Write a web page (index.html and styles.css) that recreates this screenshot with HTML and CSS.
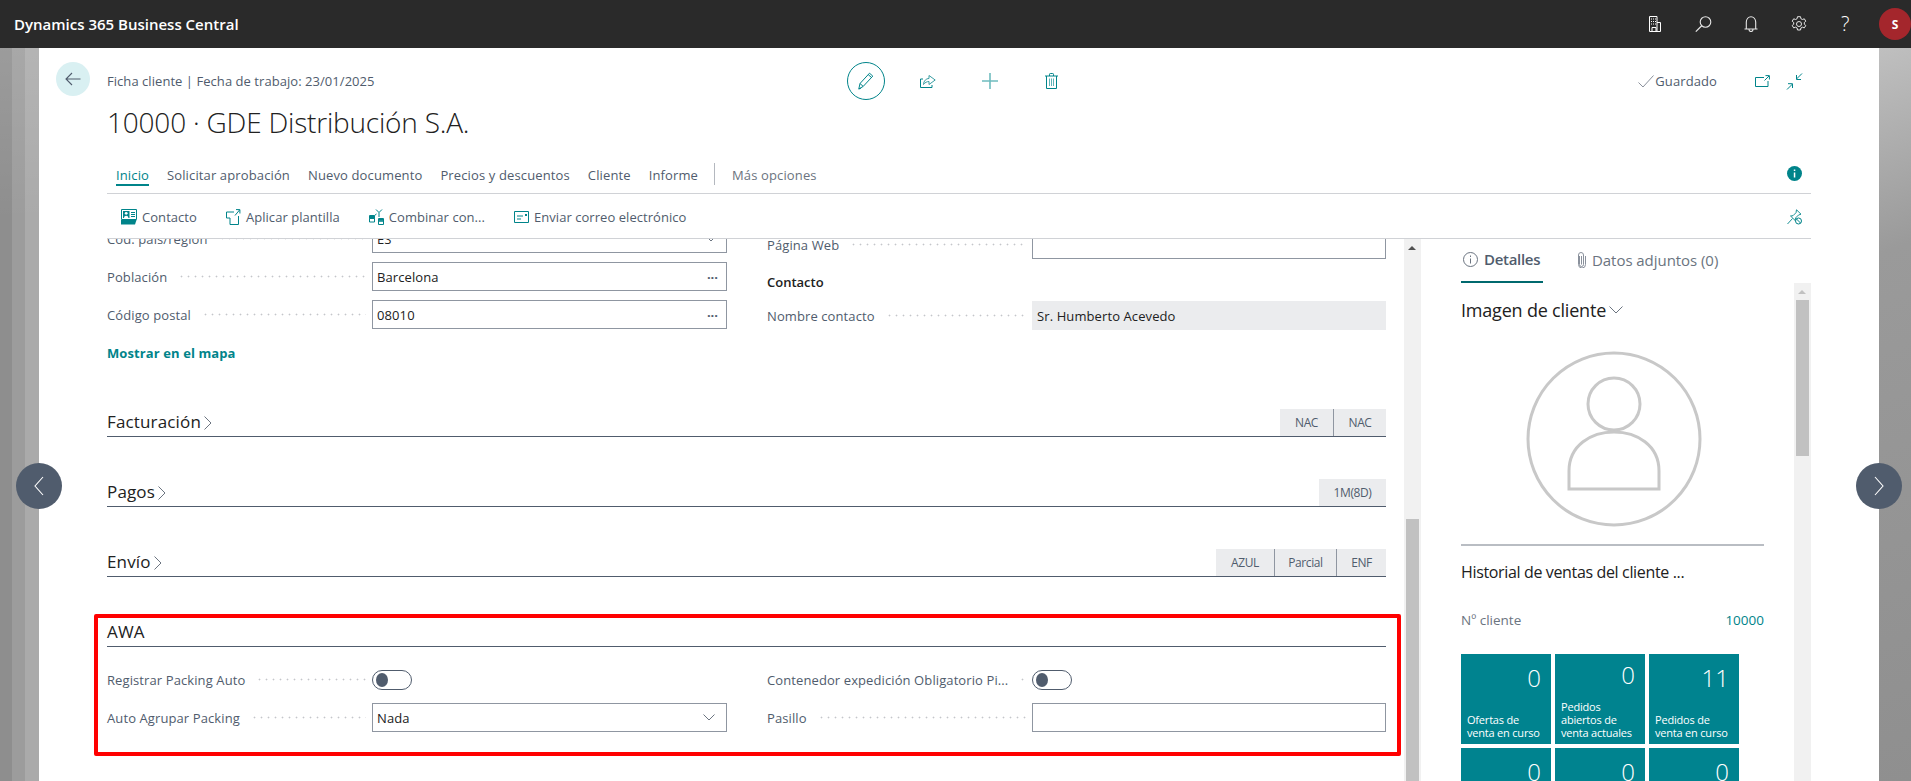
FILE: index.html
```html
<!DOCTYPE html>
<html lang="es">
<head>
<meta charset="utf-8">
<title>Ficha cliente</title>
<link rel="stylesheet" href="styles.css">
</head>
<body>
<header class="topbar">
  <div class="brand">Dynamics 365 Business Central</div>
  <div class="top-icons">
    <svg class="ti ti-building" viewBox="0 0 12 16" width="12" height="16"><path d="M.5 15.500V.5h7.500v15M8 6.500h3.500v9H.5" fill="none" stroke="#fff"/><path d="M2 2.500h1v1H2zM4 2.500h1v1H4zM6 2.500h1v1H6zM2 5h1v1H2zM4 5h1v1H4zM6 5h1v1H6zM2 7.500h1v1H2zM4 7.500h1v1H4zM6 7.500h1v1H6z" fill="#fff"/><path d="M3 15.500V11.500h4v4" fill="none" stroke="#fff"/></svg>
    <svg class="ti ti-search" viewBox="0 0 17 16" width="17" height="16"><circle cx="10.500" cy="6" r="5.300" fill="none" stroke="#e6e6e6" stroke-width="1.100"/><path d="M6.700 9.800.8 15.600" stroke="#e6e6e6" stroke-width="1.200"/></svg>
    <svg class="ti ti-bell" viewBox="0 0 14 16" width="14" height="16"><path d="M2.300 13V6a4.700 5.300 0 0 1 9.400 0v7zM.5 13h13M5 13.500a2 2 0 0 0 4 0" fill="none" stroke="#e6e6e6" stroke-width="1.100"/></svg>
    <svg class="ti ti-gear" viewBox="0 0 18 16" width="18" height="16"><circle cx="9" cy="8" r="2.500" fill="none" stroke="#e6e6e6"/><path d="M7.500.7h3l.4 2 1.500.8 1.900-.7 1.500 2.400-1.500 1.300v1.700l1.500 1.300-1.500 2.400-1.900-.7-1.500.8-.4 2h-3l-.4-2-1.500-.8-1.900.7-1.500-2.400 1.500-1.300V6.500L2.200 5.200l1.500-2.400 1.900.7 1.500-.8z" fill="none" stroke="#e6e6e6"/></svg>
    <span class="ti-help">?</span>
    <span class="avatar">S</span>
  </div>
</header>

<div class="card">
  <div class="head">
    <button class="back" aria-label="Volver"><svg viewBox="0 0 16 14" width="16" height="14"><path d="M15.500 7H1M7 1 1 7l6 6" fill="none" stroke="#505c6d" stroke-width="1.100"/></svg></button>
    <div class="crumb">Ficha cliente | Fecha de trabajo: 23/01/2025</div>
    <div class="center-actions">
      <span class="edit"><svg viewBox="0 0 16 18" width="16" height="18"><path d="M.8 17 2 11.500 11.500 1.200l3.300 2.900-9.600 10.300zM2 11.500l3.200 2.900M10.200 2.600l3.300 2.900M.8 17l2.300-.9" fill="none" stroke="#00848a"/></svg></span>
      <svg class="a-share" viewBox="0 0 16 14" width="16" height="14"><path d="M3 5H.5v8.500h11.500V11" fill="none" stroke="#00848a"/><path d="M3.500 10.500c.2-3.700 2.700-6 5.500-6V1.500l6.200 4.500L9 10.500V7.500c-2.200 0-4 1-5.500 3z" fill="none" stroke="#3a9ea3"/></svg>
      <svg class="a-plus" viewBox="0 0 16 16" width="16" height="16"><path d="M8 0v16M0 8h16" stroke="#6fbcbf" stroke-width="1.600"/></svg>
      <svg class="a-trash" viewBox="0 0 13 16" width="13" height="16"><path d="M1.500 3v12.500h10V3M4.500 3V1.300q0-.8.8-.8h2.400q.8 0 .8.8V3M0 3h13" fill="none" stroke="#00848a"/><path d="M4.500 5.500v7.500M6.500 5.500v7.500M8.500 5.500v7.500" stroke="#5fb3b7"/></svg>
    </div>
    <div class="saved">
      <svg viewBox="0 0 16 13" width="16" height="13"><path d="M.5 7.500 5 12 15.500.5" fill="none" stroke="#8a919c"/></svg>
      <span>Guardado</span>
      <svg class="s-open" viewBox="0 0 15 12" width="15" height="12"><path d="M9 2.500H.5v9h12.500V6" fill="none" stroke="#00848a"/><path d="M9.500 5.500 14 1M10.500.6H14.400V4.500" fill="none" stroke="#00848a"/></svg>
      <svg class="s-collapse" viewBox="0 0 17 17" width="17" height="17"><path d="M16 .5 10.500 6M10.500 2V6.500H15M1 16.500 6.500 11M2 10.700H6.500V15" fill="none" stroke="#00848a"/></svg>
    </div>
  </div>
  <h1 class="title">10000 · GDE Distribución S.A.</h1>

  <nav class="tabs">
    <span class="tab tab-on">Inicio</span>
    <span class="tab">Solicitar aprobación</span>
    <span class="tab">Nuevo documento</span>
    <span class="tab">Precios y descuentos</span>
    <span class="tab">Cliente</span>
    <span class="tab">Informe</span>
    <span class="tab-sep"></span>
    <span class="tab tab-more">Más opciones</span>
    <svg class="info" viewBox="0 0 15 15" width="15" height="15"><circle cx="7.500" cy="7.500" r="7.500" fill="#00848a"/><path d="M6.800 6.500h1.500v5H6.800zM6.800 3.500h1.500v1.500H6.800z" fill="#fff"/></svg>
  </nav>

  <div class="actions">
    <span class="act"><svg viewBox="0 0 16 16" width="16" height="16"><path d="M.5.500h15v10H.5z" fill="none" stroke="#00848a"/><path d="M0 11h15.500L14 15.500H0z" fill="#00848a"/><path d="M2 2h6.500v7H2z" fill="#00848a"/><path d="M10 3.500h4M10 5.500h4M10 7.500h4" stroke="#00848a"/><circle cx="5.200" cy="4.300" r="1.400" fill="#fff"/><path d="M3 9c0-3 4.400-3 4.400 0z" fill="#fff"/></svg>Contacto</span>
    <span class="act"><svg viewBox="0 0 15 16" width="15" height="16"><path d="M8 3H.5v6H4v6.500h8.500V7" fill="none" stroke="#00848a"/><path d="M9 6.500 13.500 1M10 .6h3.900V4.500" fill="none" stroke="#00848a"/></svg>Aplicar plantilla</span>
    <span class="act"><svg viewBox="0 0 15 16" width="15" height="16"><path d="M.5 6.500h5v3h-5zM.5 9.500h5v3.500h-5z" fill="none" stroke="#00848a"/><path d="M9.500 9.500h5v2.500h-5zM9.500 12h5v3.500h-5z" fill="none" stroke="#00848a"/><path d="M1 7h4v2H1zM10 9.500h4v2h-4z" fill="#00848a"/><path d="M7 .5l3 3 3-3M10 3.500V8M7.500 5l-2 1.500" fill="none" stroke="#00848a"/></svg>Combinar con...</span>
    <span class="act"><svg viewBox="0 0 15 12" width="15" height="12"><path d="M.5.500h14v11H.5z" fill="none" stroke="#00848a"/><path d="M3 5h6M3 8h4" stroke="#00848a"/><path d="M11 3h2v2h-2z" fill="#00848a"/></svg>Enviar correo electrónico</span>
    <svg class="pin" viewBox="0 0 15 16" width="15" height="16"><path d="M9.500.8 14 5.200 11.500 6l-3 3-.3 2.500L3.500 7 6 6.700l3-3zM5.500 9.500.5 15" fill="none" stroke="#00848a" stroke-width=".9"/><circle cx="11.500" cy="12" r="3" fill="#fff" stroke="#00848a"/><path d="m9.500 10 4 4" stroke="#00848a"/></svg>
  </div>

  <div class="main">
    <section class="form">
      <div class="cols">
        <div class="col">
          <div class="row"><span class="lbl">Cód. país/región</span><span class="val">ES<svg class="chev" viewBox="0 0 12 7" width="12" height="7"><path d="m.5.500 5.500 5.500L11.500.5" fill="none" stroke="#6b7480"/></svg></span></div>
          <div class="row"><span class="lbl">Población</span><span class="val">Barcelona<span class="dots">···</span></span></div>
          <div class="row"><span class="lbl">Código postal</span><span class="val">08010<span class="dots">···</span></span></div>
          <a class="maplink">Mostrar en el mapa</a>
        </div>
        <div class="col col-right">
          <div class="row"><span class="lbl">Página Web</span><span class="val"></span></div>
          <div class="subhead">Contacto</div>
          <div class="row"><span class="lbl">Nombre contacto</span><span class="val val-ro">Sr. Humberto Acevedo</span></div>
        </div>
      </div>

      <div class="sec sec-first"><h2 class="sec-t">Facturación<svg class="sec-c" viewBox="0 0 8 14" width="8" height="14"><path d="m.5.500 6.500 6.500-6.500 6.500" fill="none" stroke="#6b7480"/></svg></h2><div class="chips"><span class="chip chip-nac">NAC</span><span class="chip chip-nac">NAC</span></div></div>
      <div class="sec"><h2 class="sec-t">Pagos<svg class="sec-c" viewBox="0 0 8 14" width="8" height="14"><path d="m.5.500 6.500 6.500-6.500 6.500" fill="none" stroke="#6b7480"/></svg></h2><div class="chips"><span class="chip chip-pay">1M(8D)</span></div></div>
      <div class="sec"><h2 class="sec-t">Envío<svg class="sec-c" viewBox="0 0 8 14" width="8" height="14"><path d="m.5.500 6.500 6.500-6.500 6.500" fill="none" stroke="#6b7480"/></svg></h2><div class="chips"><span class="chip chip-azul">AZUL</span><span class="chip chip-par">Parcial</span><span class="chip chip-enf">ENF</span></div></div>

      <div class="awa">
        <div class="sec sec-awa"><h2 class="sec-t">AWA</h2></div>
        <div class="cols cols-awa">
          <div class="col">
            <div class="row"><span class="lbl">Registrar Packing Auto</span><span class="toggle"></span></div>
            <div class="row"><span class="lbl">Auto Agrupar Packing</span><span class="val">Nada<svg class="chev chev-sel" viewBox="0 0 12 7" width="12" height="7"><path d="m.5.500 5.500 5.500L11.500.5" fill="none" stroke="#6b7480"/></svg></span></div>
          </div>
          <div class="col col-r2">
            <div class="row"><span class="lbl">Contenedor expedición Obligatorio Pi...</span><span class="toggle"></span></div>
            <div class="row"><span class="lbl">Pasillo</span><span class="val"></span></div>
          </div>
        </div>
      </div>
    </section>

    <div class="sbar sbar-main"><span class="sup sup-dark"></span><span class="thumb-main"></span></div>

    <aside class="pane">
      <div class="pane-tabs">
        <span class="ptab ptab-on"><svg viewBox="0 0 15 15" width="15" height="15"><circle cx="7.500" cy="7.500" r="7" fill="none" stroke="#6b7480"/><path d="M7.500 6.500V11.500M7.500 3.500v1.500" stroke="#6b7480"/></svg>Detalles</span>
        <span class="ptab"><svg viewBox="0 0 9 16" width="9" height="16"><path d="M2.500 4v8.500a2 2 0 0 0 4 0V3a2.500 2.500 0 0 0-5 0v9.500a3.500 3.500 0 0 0 7 0V4M4.500 4v8.500" fill="none" stroke="#8a919c"/></svg>Datos adjuntos (0)</span>
      </div>
      <div class="pane-body">
        <div class="pane-content">
          <h3 class="p-head">Imagen de cliente<svg viewBox="0 0 14 8" width="14" height="8"><path d="m.5.500 6.500 6.500 6.500-6.500" fill="none" stroke="#6b7480"/></svg></h3>
          <svg class="person" viewBox="0 0 176 176" width="176" height="176"><circle cx="88" cy="88" r="86" fill="none" stroke="#c8c8c8" stroke-width="3"/><ellipse cx="88" cy="53" rx="26" ry="26" fill="none" stroke="#c8c8c8" stroke-width="3"/><path d="M43 138V120c0-52 90-52 90 0v18z" fill="none" stroke="#c8c8c8" stroke-width="3"/></svg>
          <hr class="p-rule">
          <h3 class="p-head2">Historial de ventas del cliente ...</h3>
          <div class="p-row"><span>Nº cliente</span><a>10000</a></div>
          <div class="tiles">
            <div class="tile"><span class="num">0</span><span class="cap">Ofertas de venta en curso</span></div>
            <div class="tile tile-up"><span class="num">0</span><span class="cap">Pedidos abiertos de venta actuales</span></div>
            <div class="tile"><span class="num">11</span><span class="cap">Pedidos de venta en curso</span></div>
            <div class="tile"><span class="num">0</span></div>
            <div class="tile"><span class="num">0</span></div>
            <div class="tile"><span class="num">0</span></div>
          </div>
        </div>
        <div class="sbar sbar-pane"><span class="sup"></span><span class="thumb-pane"></span></div>
      </div>
    </aside>
  </div>
</div>

<button class="nav nav-l" aria-label="Anterior"><svg viewBox="0 0 10 20" width="10" height="20"><path d="M9 1 1 10l8 9" fill="none" stroke="#fff" stroke-width="1.100"/></svg></button>
<button class="nav nav-r" aria-label="Siguiente"><svg viewBox="0 0 10 20" width="10" height="20"><path d="m1 1 8 9-8 9" fill="none" stroke="#fff" stroke-width="1.100"/></svg></button>
</body>
</html>
```

FILE: styles.css
```css
* { box-sizing: border-box; }
html, body { margin: 0; height: 100%; }
body {
  width: 1911px;
  height: 781px;
  overflow: hidden;
  position: relative;
  font-family: "Open Sans", "Noto Sans", sans-serif;
  font-size: 13px;
  letter-spacing: 0.1px;
  color: #505c6d;
  background:
    linear-gradient(160deg, #c8c8c8 0, #9a9a9a 32%, #8f8f8f 100%) right top / 32px 100% no-repeat,
    linear-gradient(to bottom, rgba(255,255,255,.12) 48px, rgba(255,255,255,0) 220px),
    linear-gradient(to right, #8e8e8e 0, #8e8e8e 12px, #9c9c9c 12px, #9c9c9c 25px, #aaaaaa 25px, #aaaaaa 100%);
}
h1, h2, h3 { margin: 0; font-weight: 400; }

.topbar {
  height: 48px;
  background: #2a2a2a;
  display: flex;
  align-items: center;
  color: #fff;
  padding-left: 14px;
}
.brand { font-weight: 600; font-size: 15px; letter-spacing: 0; }
.top-icons { margin-left: auto; display: flex; align-items: center; }
.ti-building { margin-right: 34px; }
.ti-search { margin-right: 32px; }
.ti-bell { margin-right: 32px; }
.ti-gear { margin-right: 33px; }
.ti-help { font-size: 20px; font-weight: 300; width: 10px; margin-right: 28px; line-height: 1; }
.avatar {
  width: 32px; height: 32px; border-radius: 50%;
  background: #a4262c; font-weight: 700; font-size: 12px;
  display: flex; align-items: center; justify-content: center;
}

.card {
  width: 1840px;
  height: 733px;
  margin-left: 39px;
  background: #fff;
  overflow: hidden;
  display: flex;
  flex-direction: column;
}
.head { display: flex; padding: 14px 76px 0 17px; height: 52px; align-items: center; }
.back {
  width: 34px; height: 34px; padding: 0; border: 0; border-radius: 50%;
  background: #d9f0f2; margin-right: 17px; align-self: flex-start;
  display: flex; align-items: center; justify-content: center;
}
.crumb { width: 740px; color: #505c6d; white-space: nowrap; letter-spacing: 0.05px; }
.center-actions { display: flex; align-items: center; }
.edit {
  width: 38px; height: 38px; border-radius: 50%; border: 1px solid #00848a;
  display: flex; align-items: center; justify-content: center; margin-right: 35px;
}
.a-share { margin-right: 46px; }
.a-plus { margin-right: 47px; }
.saved { margin-left: auto; display: flex; align-items: center; }
.saved span { margin-left: 1px; }
.s-open { margin-left: 38px; margin-right: 16px; }
.title {
  margin: 4px 0 0 68px; font-size: 28px; line-height: 36px; font-weight: 300;
  color: #212121; letter-spacing: -0.2px; height: 36px;
}

.tabs {
  margin: 23px 68px 0; height: 31px; display: flex; align-items: flex-start;
  border-bottom: 1px solid #d0d2d6; padding: 0 9px; gap: 18px;
}
.tab { height: 23px; line-height: 25px; color: #505c6d; white-space: nowrap; letter-spacing: 0.13px; }
.tab-on { color: #00848a; border-bottom: 2px solid #00848a; }
.tab-more { color: #6b7480; margin-left: -1px; }
.tab-sep { width: 1px; height: 22px; background: #b4b8bf; margin-left: -2px; }
.info { margin-left: auto; margin-top: 3px; }

.actions {
  margin: 0 68px; height: 45px; display: flex; align-items: center;
  border-bottom: 1px solid #d0d2d6; padding: 2px 9px 0 14px; gap: 29px;
}
.act { display: flex; align-items: center; gap: 5px; color: #505c6d; white-space: nowrap; letter-spacing: 0.05px; }
.pin { margin-left: auto; }

.main { flex: 1; min-height: 0; display: flex; padding-left: 68px; overflow: hidden; }
.form { width: 1279px; flex: none; }
.cols { display: grid; grid-template-columns: 620px 619px; column-gap: 40px; margin-top: -15px; }
.col { display: flex; flex-direction: column; gap: 9px; }
.col-right { padding-top: 6px; gap: 0; }
.row { display: flex; height: 29px; align-items: center; }
.lbl {
  width: 265px; flex: none; display: flex; align-items: center; white-space: nowrap;
  color: #505c6d; padding-right: 6px;
}
.lbl::after {
  content: ""; flex: 1; min-width: 0; height: 3px; margin-left: 11px;
  background: radial-gradient(circle at center, #c4c6ca 0.8px, transparent 1.1px) 0 0 / 7px 3px repeat-x;
}
.val {
  flex: 1; height: 29px; border: 1px solid #8f96a1; display: flex; align-items: center;
  padding: 0 4px; color: #212121; position: relative;
}
.val-ro { background: #ebecee; border-color: #ebecee; }
.chev { margin-left: auto; margin-right: 5px; }
.chev-sel { margin-right: 7px; }
.dots { margin-left: auto; margin-right: 4px; font-weight: 700; color: #505c6d; letter-spacing: 0; }
.maplink { color: #00848a; font-weight: 700; height: 20px; line-height: 20px; margin-top: 5px; }
.subhead { color: #212121; font-weight: 600; height: 20px; line-height: 20px; margin: 13px 0 9px; letter-spacing: 0; }

.sec { height: 28px; border-bottom: 1px solid #505c6d; display: flex; align-items: center; margin-top: 42px; }
.sec-first { margin-top: 46px; }
.sec-t { font-size: 17px; color: #212121; font-weight: 400; display: flex; align-items: center; gap: 3px; letter-spacing: 0.15px; padding-bottom: 2px; }
.sec-c { margin-top: 2px; }
.chips { margin-left: auto; display: flex; align-self: flex-end; height: 27px; }
.chip {
  background: #ebecee; display: flex; align-items: center; justify-content: center;
  color: #505c6d; font-size: 12px; letter-spacing: -0.4px; border-left: 1px solid #8f96a1;
}
.chip:first-child { border-left: 0; }
.chip-nac { width: 53px; }
.chip-pay { width: 67px; }
.chip-azul { width: 58px; }
.chip-par { width: 62px; }
.chip-enf { width: 50px; }

.awa { position: relative; margin-top: 42px; }
.awa::after {
  content: ""; position: absolute; inset: -5px -15px -24px -13px;
  border: 4px solid #f00; border-radius: 2px; pointer-events: none;
}
.sec-awa { margin-top: 0; }
.cols-awa { margin-top: 18px; }
.toggle {
  width: 40px; height: 20px; border: 1px solid #505c6d; border-radius: 10px; position: relative; flex: none;
}
.toggle::before {
  content: ""; position: absolute; left: 3px; top: 2px; width: 12px; height: 14px;
  border-radius: 50%; background: #505c6d;
}

.sbar { background: #f1f1f1; position: relative; flex: none; width: 17px; }
.sbar-main { margin-left: 18px; }
.sup {
  position: absolute; left: 4px; top: 7px; width: 0; height: 0;
  border: 4px solid transparent; border-top: 0; border-bottom: 4px solid #c1c1c1;
}
.sup-dark { border-bottom-color: #505050; }
.thumb-main { position: absolute; left: 2px; right: 2px; top: 280px; bottom: 0; background: #c1c1c1; }
.thumb-pane { position: absolute; left: 2px; right: 2px; top: 17px; height: 156px; background: #c1c1c1; }

.pane { flex: 1; min-width: 0; display: flex; flex-direction: column; padding-left: 40px; }
.pane-tabs { height: 44px; display: flex; flex: none; }
.ptab { display: flex; align-items: center; gap: 6px; font-size: 15px; letter-spacing: -0.05px; color: #6b7480; height: 44px; padding-bottom: 2px; }
.ptab-on { width: 82px; padding-left: 2px; font-weight: 600; color: #505c6d; border-bottom: 2px solid #00696e; margin-right: 34px; letter-spacing: -0.3px; white-space: nowrap; }
.pane-body { flex: 1; min-height: 0; display: flex; }
.pane-content { width: 303px; flex: none; margin-right: 30px; }
.p-head { font-size: 18px; line-height: 22px; margin-top: 16px; color: #212121; display: flex; align-items: center; gap: 3px; letter-spacing: -0.2px; }
.person { display: block; margin: 30px 0 0 65px; }
.p-rule { border: 0; height: 2px; background: #b9bdc3; margin: 17px 0 0; }
.p-head2 { font-size: 16px; line-height: 22px; margin-top: 15px; color: #212121; letter-spacing: -0.35px; white-space: nowrap; }
.p-row { display: flex; justify-content: space-between; font-size: 13.500px; letter-spacing: 0; line-height: 20px; margin-top: 27px; color: #6b7480; }
.p-row a { color: #00848a; }
.tiles { display: grid; grid-template-columns: repeat(3, 90px); grid-auto-rows: 90px; gap: 4px; margin-top: 24px; }
.tile { background: #00838f; color: #fff; display: flex; flex-direction: column; padding: 10px 10px 5px 6px; }
.tile-up { padding-top: 7px; }
.num { font-size: 24px; line-height: 28px; font-weight: 300; text-align: right; letter-spacing: 0; }
.cap { margin-top: auto; font-size: 11px; line-height: 13px; letter-spacing: -0.2px; }

.nav {
  position: absolute; top: 463px; width: 46px; height: 46px; padding: 0; border: 0; border-radius: 50%;
  background: #505c6d; display: flex; align-items: center; justify-content: center;
}
.nav-l { left: 16px; }
.nav-r { left: 1856px; }
```
